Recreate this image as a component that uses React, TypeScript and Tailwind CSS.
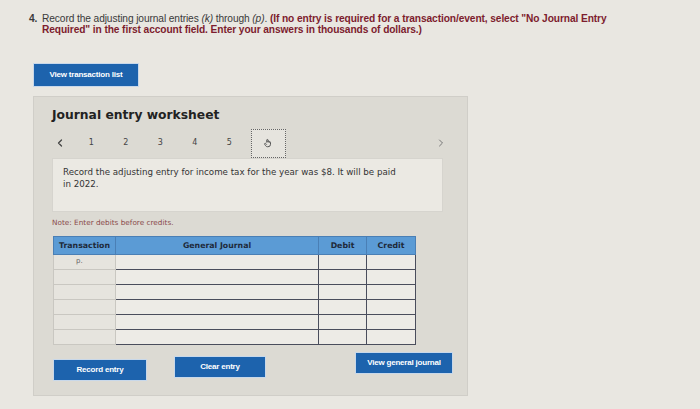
import { ChevronLeft, ChevronRight } from "lucide-react";

const rows = ["p.", "", "", "", "", ""];

function Btn({ label, className }: { label: string; className?: string }) {
  return (
    <button
      className={`h-[22px] bg-[#1d63ad] text-white text-[8px] font-bold tracking-tight border border-[#c8d8ea] ${className ?? ""}`}
      style={{ fontFamily: "'Liberation Sans', Arial, sans-serif" }}
    >
      {label}
    </button>
  );
}

export default function App() {
  return (
    <div className="w-[700px] h-[409px] overflow-hidden bg-[#e9e7e1] relative">
      <div
        className="pt-[13px] pl-[29px] text-[10.2px] leading-[11px] text-[#3a3a3a] tracking-[-0.1px]"
        style={{ fontFamily: "'Liberation Sans', Arial, sans-serif" }}
      >
        <div className="flex">
          <span className="font-bold w-[13px]">4.</span>
          <div>
            Record the adjusting journal entries <i>(k)</i> through <i>(p)</i>.{" "}
            <span className="font-bold text-[#7d1d2e]">
              (If no entry is required for a transaction/event, select "No Journal Entry
              <br />
              Required" in the first account field. Enter your answers in thousands of dollars.)
            </span>
          </div>
        </div>
      </div>

      <div className="ml-[33px] mt-[24px]">
        <Btn label="View transaction list" className="w-[106px] h-[24px]" />
      </div>

      <div
        className="ml-[33px] mt-[9px] w-[435px] h-[300px] bg-[#dcdad3] border border-[#d0cec8] pt-[9px] px-[18px]"
        style={{ fontFamily: "'DejaVu Sans', Verdana, sans-serif" }}
      >
        <div className="text-[12.3px] font-bold text-[#222]">Journal entry worksheet</div>
        <div className="flex items-center mt-[4px] h-[30px] text-[8px] text-[#444]">
          <ChevronLeft className="w-[12px] h-[12px] ml-[2px] text-[#444]" strokeWidth={2.5} />
          <div className="flex ml-[8px]">
            {[1, 2, 3, 4, 5].map((n) => (
              <span key={n} className="w-[34.5px] text-center">
                {n}
              </span>
            ))}
          </div>
          <div className="ml-[4px] w-[35px] h-[29px] border border-dotted border-[#666] bg-[#e6e4de] flex items-center justify-center">
            <svg width="10" height="10" viewBox="0 0 24 24" fill="none" stroke="#555" strokeWidth="2.4">
              <path d="M9 11V5a1.5 1.5 0 0 1 3 0v5" />
              <path d="M12 10V8.5a1.5 1.5 0 0 1 3 0V11" />
              <path d="M15 10.5a1.5 1.5 0 0 1 3 0V15a6 6 0 0 1-6 6h-1a6 6 0 0 1-5-2.7L4 15a1.5 1.5 0 0 1 2.5-1.7L9 16" />
            </svg>
          </div>
          <ChevronRight className="w-[12px] h-[12px] ml-auto mr-[2px] text-[#777]" strokeWidth={2} />
        </div>
        <div className="w-[391px] h-[54px] bg-[#ebe9e3] border border-[#d6d4ce] px-[10px] pt-[7px] text-[8.7px] leading-[12px] text-[#333]">
          Record the adjusting entry for income tax for the year was $8. It will be paid
          <br />
          in 2022.
        </div>
        <div className="mt-[6px] text-[7.3px] text-[#8a4b4b]">Note: Enter debits before credits.</div>

        <table className="mt-[7px] ml-[1px] w-[362px] border-collapse text-[7.8px] table-fixed">
          <thead>
            <tr className="h-[18px] bg-[#5b9bd5] text-[#1e2a3a]">
              <th className="w-[62px] font-semibold border border-[#4a7fb5]">Transaction</th>
              <th className="w-[203px] font-semibold border border-[#4a7fb5]">General Journal</th>
              <th className="w-[48px] font-semibold border border-[#4a7fb5]">Debit</th>
              <th className="w-[49px] font-semibold border border-[#4a7fb5]">Credit</th>
            </tr>
          </thead>
          <tbody>
            {rows.map((r, i) => (
              <tr key={i} className="h-[15px]">
                <td className="bg-[#e6e4de] border border-[#c9c7c1] text-[#666] pl-[22px] align-top pt-[1px] text-[7px]">
                  {r}
                </td>
                <td className="bg-[#edebe6] border-[1.5px] border-[#4a4d5c]" />
                <td className="bg-[#edebe6] border-[1.5px] border-[#4a4d5c]" />
                <td className="bg-[#edebe6] border-[1.5px] border-[#4a4d5c]" />
              </tr>
            ))}
          </tbody>
        </table>

        <div className="flex items-start mt-[10px] ml-[1px] w-[400px]">
          <Btn label="Record entry" className="w-[94px] mt-[4px]" />
          <Btn label="Clear entry" className="w-[92px] ml-[27px] mt-[1px]" />
          <Btn label="View general journal" className="w-[98px] ml-auto -mt-[3px]" />
        </div>
      </div>
    </div>
  );
}
